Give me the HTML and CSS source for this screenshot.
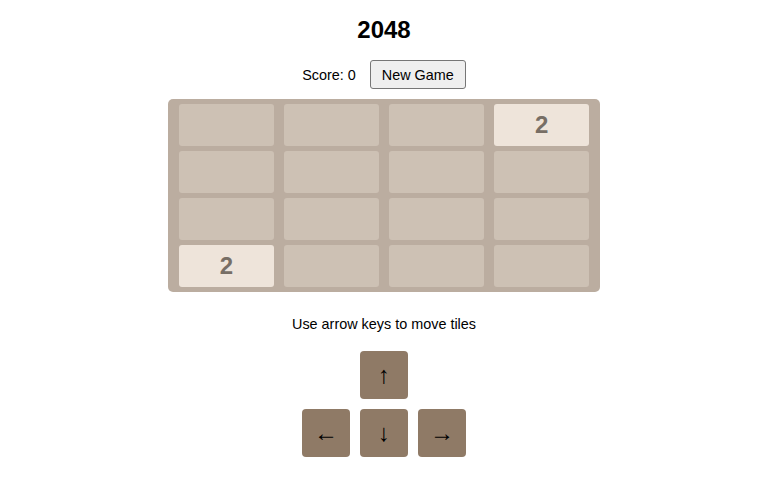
FILE: index.html
```html
<!DOCTYPE html>
<html>
<head>
<meta charset="utf-8">
<link rel="stylesheet" href="styles.css">
</head>
<body>
<h1 class="title">2048</h1>
<div class="controls">
  <span class="score">Score: 0</span>
  <button class="new-game">New Game</button>
</div>
<div class="board">
  <div class="tile"></div><div class="tile"></div><div class="tile"></div><div class="tile t2">2</div>
  <div class="tile"></div><div class="tile"></div><div class="tile"></div><div class="tile"></div>
  <div class="tile"></div><div class="tile"></div><div class="tile"></div><div class="tile"></div>
  <div class="tile t2">2</div><div class="tile"></div><div class="tile"></div><div class="tile"></div>
</div>
<p class="hint">Use arrow keys to move tiles</p>
<div class="pad">
  <div class="pad-row"><button class="key">↑</button></div>
  <div class="pad-row"><button class="key">←</button><button class="key">↓</button><button class="key">→</button></div>
</div>
</body>
</html>
```
FILE: styles.css
```css
html, body {
  margin: 0;
  padding: 0;
  background: #ffffff;
}
body {
  font-family: "Liberation Sans", Arial, sans-serif;
  text-align: center;
  color: #000;
  padding-top: 16px;
}
.title {
  margin: 0 0 16px;
  font-size: 24px;
  line-height: 28px;
  font-weight: bold;
}
.controls {
  display: flex;
  justify-content: center;
  align-items: center;
  gap: 14px;
  height: 29px;
}
.score {
  font-size: 14.4px;
}
.new-game {
  font-family: "Liberation Sans", Arial, sans-serif;
  font-size: 14.4px;
  height: 29px;
  padding: 0 11px;
  background: #efefef;
  border: 1px solid #767676;
  border-radius: 3px;
  color: #000;
}
.board {
  width: 432px;
  box-sizing: border-box;
  margin: 10px auto 0;
  padding: 5px 11px;
  background: #bbada0;
  border-radius: 5px;
  display: grid;
  grid-template-columns: repeat(4, 1fr);
  grid-auto-rows: 42px;
  column-gap: 10.5px;
  row-gap: 5px;
}
.tile {
  background: #cdc1b4;
  border-radius: 3px;
  display: flex;
  align-items: center;
  justify-content: center;
  font-size: 24px;
  font-weight: bold;
  color: #776e65;
}
.tile.t2 {
  background: #eee4da;
}
.hint {
  margin: 24px 0 0;
  font-size: 14.4px;
  line-height: 17px;
}
.pad {
  margin-top: 18px;
  display: flex;
  flex-direction: column;
  align-items: center;
  gap: 10px;
}
.pad-row {
  display: flex;
  gap: 10px;
}
.key {
  width: 48px;
  height: 48px;
  padding: 0;
  border: none;
  border-radius: 4px;
  background: #8f7a66;
  color: #000;
  font-family: "Liberation Sans", Arial, sans-serif;
  font-size: 24px;
  line-height: 1;
}
```
